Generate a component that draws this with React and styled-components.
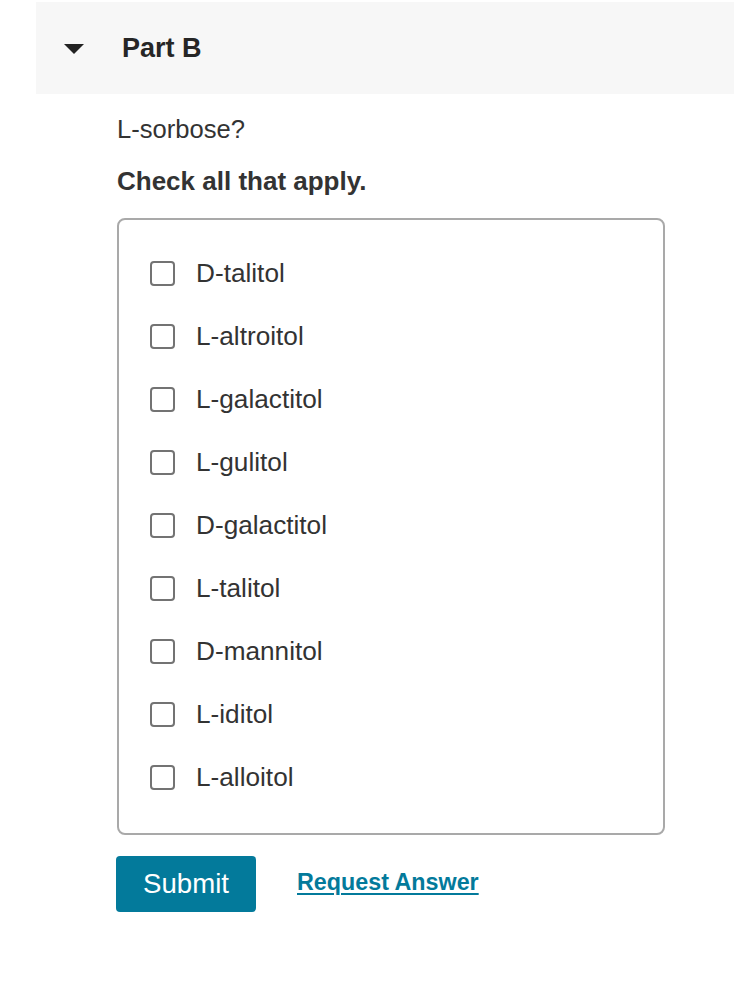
import React from "react";
import styled, { createGlobalStyle } from "styled-components";

const Global = createGlobalStyle`
  html, body { margin: 0; padding: 0; background: #ffffff; }
  body { font-family: "Liberation Sans", Arial, Helvetica, sans-serif; color: #333333; }
`;

const Page = styled.div`
  width: 734px;
  padding-top: 2px;
`;

const PartHeader = styled.div`
  margin-left: 36px;
  height: 92px;
  background: #f7f7f7;
  display: flex;
  align-items: center;
  padding-left: 28px;
  gap: 38px;
`;

const Caret = styled.span`
  width: 0;
  height: 0;
  border-left: 10.5px solid transparent;
  border-right: 10.5px solid transparent;
  border-top: 10px solid #222222;
  margin-top: 1px;
`;

const PartTitle = styled.h2`
  margin: 0;
  font-size: 27px;
  font-weight: 700;
  color: #262626;
  line-height: 36px;
`;

const Body = styled.div`
  padding-left: 117px;
`;

const Question = styled.p`
  margin: 17px 0 0;
  font-size: 25.6px;
  line-height: 36px;
`;

const Instruction = styled.p`
  margin: 16px 0 0;
  font-size: 26px;
  font-weight: 700;
  line-height: 36px;
`;

const OptionBox = styled.div`
  margin-top: 19px;
  width: 548px;
  box-sizing: border-box;
  border: 2px solid #a9a9a9;
  border-radius: 8px;
  padding: 22px 0 24px 31px;
  display: flex;
  flex-direction: column;
`;

const OptionRow = styled.label`
  height: 63px;
  display: flex;
  align-items: center;
  gap: 21px;
  font-size: 26.2px;
  color: #333333;
`;

const Box = styled.span`
  width: 25px;
  height: 25px;
  box-sizing: border-box;
  border: 2px solid #737373;
  border-radius: 4px;
  background: #ffffff;
  flex-shrink: 0;
`;

const Actions = styled.div`
  margin-top: 21px;
  display: flex;
  align-items: center;
  gap: 41px;
`;

const SubmitButton = styled.button`
  width: 140px;
  height: 56px;
  border: none;
  border-radius: 4px;
  background: #037a9b;
  color: #ffffff;
  font-family: "Liberation Sans", Arial, sans-serif;
  font-size: 27.6px;
  padding: 0;
  margin-left: -1px;
`;

const RequestLink = styled.a`
  font-size: 23.3px;
  font-weight: 700;
  color: #037a9b;
  text-decoration: underline;
  text-underline-offset: 3px;
  text-decoration-thickness: 2px;
  margin-top: -4px;
`;

const options = [
  "D-talitol",
  "L-altroitol",
  "L-galactitol",
  "L-gulitol",
  "D-galactitol",
  "L-talitol",
  "D-mannitol",
  "L-iditol",
  "L-alloitol",
];

export default function App() {
  return (
    <>
      <Global />
      <Page>
        <PartHeader>
          <Caret />
          <PartTitle>Part B</PartTitle>
        </PartHeader>
        <Body>
          <Question>L-sorbose?</Question>
          <Instruction>Check all that apply.</Instruction>
          <OptionBox>
            {options.map((o) => (
              <OptionRow key={o}>
                <Box />
                <span>{o}</span>
              </OptionRow>
            ))}
          </OptionBox>
          <Actions>
            <SubmitButton>Submit</SubmitButton>
            <RequestLink href="#">Request Answer</RequestLink>
          </Actions>
        </Body>
      </Page>
    </>
  );
}
